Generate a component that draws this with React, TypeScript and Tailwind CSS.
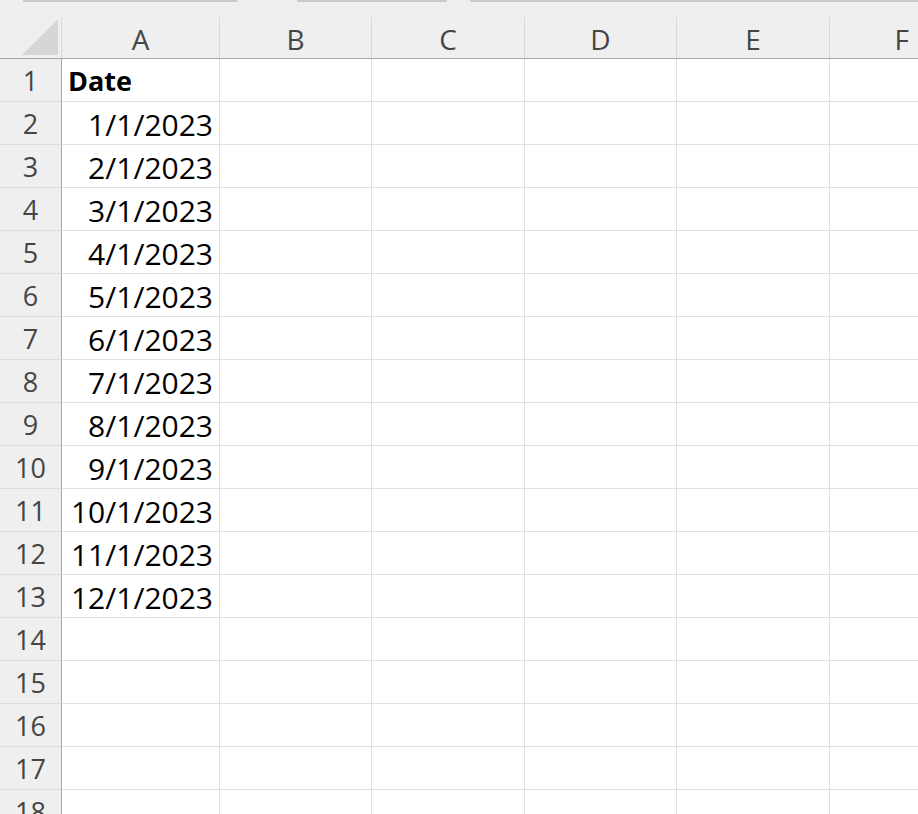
const columns = [
	{ label: "A", width: "w-[158px]" },
	{ label: "B", width: "w-[152px]" },
	{ label: "C", width: "w-[153px]" },
	{ label: "D", width: "w-[152px]" },
	{ label: "E", width: "w-[153px]" },
	{ label: "F", width: "flex-1" },
];

const dates = [
	"1/1/2023",
	"2/1/2023",
	"3/1/2023",
	"4/1/2023",
	"5/1/2023",
	"6/1/2023",
	"7/1/2023",
	"8/1/2023",
	"9/1/2023",
	"10/1/2023",
	"11/1/2023",
	"12/1/2023",
];

const headerFont = "font-['Open_Sans','Noto_Sans',sans-serif]";
const cellFont = "font-['Open_Sans','Noto_Sans',sans-serif]";

function CornerCell() {
	return (
		<div className="flex h-full w-[62px] shrink-0 items-end justify-end border-r border-[#d9d9d9] pr-[3px] pb-[3px]">
			<svg width="36" height="36" viewBox="0 0 36 36">
				<polygon points="36,0 36,36 0,36" fill="#d6d6d6" />
			</svg>
		</div>
	);
}

function Row({ index, value }: { index: number; value?: string }) {
	const isHeader = index === 1;
	return (
		<div className="flex h-[43px] shrink-0">
			<div
				className={`flex w-[62px] shrink-0 items-center justify-center border-r border-b border-r-[#a8a8a8] border-b-[#dcdcdc] bg-[#efefef] pt-[3px] text-[27px] text-[#454545] ${headerFont}`}
			>
				{index}
			</div>
			{columns.map((col, i) => (
				<div
					key={col.label}
					className={`${col.width} flex shrink-0 items-center border-b border-[#e0e0e0] ${
						i < columns.length - 1 ? "border-r" : ""
					} pt-[3px] text-black ${cellFont}`}
				>
					{i === 0 && value && (
						<span
							className={
								isHeader
									? "pl-[6px] text-[27px] font-bold"
									: "ml-auto pr-[6px] text-[30px] leading-none"
							}
						>
							{value}
						</span>
					)}
				</div>
			))}
		</div>
	);
}

export default function App() {
	const rows: (string | undefined)[] = [
		"Date",
		...dates,
		undefined,
		undefined,
		undefined,
		undefined,
		undefined,
	];

	return (
		<div className="flex h-[814px] w-[918px] flex-col overflow-hidden bg-white">
			<div className="flex h-[17px] shrink-0 items-start bg-[#efefef]">
				<div className="w-[23px] shrink-0" />
				<div className="h-[2px] w-[215px] shrink-0 rounded-full bg-[#c9c9c9]" />
				<div className="w-[59px] shrink-0" />
				<div className="h-[2px] w-[150px] shrink-0 rounded-full bg-[#c9c9c9]" />
				<div className="w-[23px] shrink-0" />
				<div className="h-[2px] flex-1 rounded-l-full bg-[#c9c9c9]" />
			</div>

			<div className="flex h-[42px] shrink-0 border-b border-[#a8a8a8] bg-[#efefef]">
				<CornerCell />
				{columns.map((col, i) => (
					<div
						key={col.label}
						className={`${col.width} flex shrink-0 items-center justify-center ${
							i < columns.length - 1 ? "border-r border-[#d9d9d9]" : ""
						} pt-[2px] text-[28px] text-[#454545] ${headerFont} ${
							col.label === "F" ? "justify-end pr-[9px]" : ""
						}`}
					>
						{col.label}
					</div>
				))}
			</div>

			{rows.map((value, i) => (
				<Row key={i} index={i + 1} value={value} />
			))}
		</div>
	);
}
